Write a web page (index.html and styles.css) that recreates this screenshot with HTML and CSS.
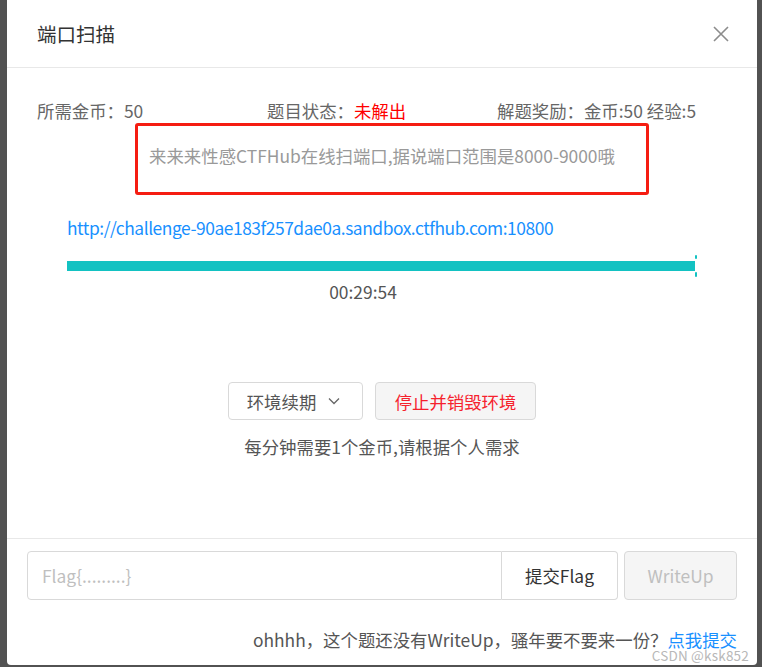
FILE: index.html
```html
<!DOCTYPE html>
<html lang="zh-CN">
<head>
<meta charset="utf-8">
<title>端口扫描</title>
<link rel="stylesheet" href="styles.css">
</head>
<body>
<div class="modal">
  <div class="modal-header">
    <div class="modal-title">端口扫描</div>
    <span class="close">
      <svg width="16" height="16" viewBox="0 0 16 16"><path d="M1 1L15 15M15 1L1 15" stroke="#8c8c8c" stroke-width="1.6" fill="none"/></svg>
    </span>
  </div>
  <div class="modal-body">
    <div class="info-row">
      <div class="info-col">所需金币：50</div>
      <div class="info-col">题目状态：<span class="unsolved">未解出</span></div>
      <div class="info-col">解题奖励：金币:50 经验:5</div>
    </div>
    <div class="desc">
      <p class="desc-text">来来来性感CTFHub在线扫端口,据说端口范围是8000-9000哦</p>
      <div class="annot"></div>
    </div>
    <div class="env">
      <a class="url" href="#">http://challenge-90ae183f257dae0a.sandbox.ctfhub.com:10800</a>
      <div class="progress">
        <div class="bar"></div>
        <span class="mark mark-top"></span>
        <span class="mark mark-bottom"></span>
      </div>
      <div class="timer">00:29:54</div>
    </div>
    <div class="actions">
      <button class="btn btn-renew">环境续期
        <svg class="chev" width="12" height="8" viewBox="0 0 12 8"><path d="M1 1.5L6 6.5L11 1.5" stroke="#666" stroke-width="1.3" fill="none"/></svg>
      </button>
      <button class="btn btn-stop">停止并销毁环境</button>
    </div>
    <div class="hint">每分钟需要1个金币,请根据个人需求</div>
  </div>
  <div class="modal-footer">
    <div class="flag-row">
      <div class="input-group">
        <input class="flag-input" type="text" placeholder="Flag{.........}">
        <button class="btn-submit">提交Flag</button>
      </div>
      <button class="btn-writeup" disabled>WriteUp</button>
    </div>
    <div class="wu-note">ohhhh，这个题还没有WriteUp，骚年要不要来一份？<a href="#" class="wu-link">点我提交</a></div>
  </div>
  <div class="watermark">CSDN @ksk852</div>
</div>
</body>
</html>
```
FILE: styles.css
```css
* { box-sizing: border-box; }
html, body { margin: 0; padding: 0; }
body {
  width: 762px;
  height: 667px;
  background: #525252;
  font-family: "Noto Sans CJK SC", "Noto Sans", sans-serif;
  overflow: hidden;
}
.modal {
  position: relative;
  margin-left: 7px;
  width: 750px;
  height: 665px;
  background: #fff;
  border-radius: 0 0 4px 4px;
  display: flex;
  flex-direction: column;
}
.modal-header {
  height: 68px;
  border-bottom: 1px solid #e8e8e8;
  display: flex;
  align-items: center;
  justify-content: space-between;
  padding: 0 28px 0 30px;
}
.modal-title {
  font-size: 19.5px;
  color: #333;
}
.close { display: flex; width: 16px; height: 16px; }
.modal-body {
  flex: 1;
  padding: 31px 30px 0;
  color: #666;
  font-size: 17.4px;
}
.info-row { display: flex; height: 24px; line-height: 24px; }
.info-col { width: 230px; white-space: nowrap; }
.unsolved { color: #ff0000; }
.desc {
  position: relative;
  height: 72px;
  padding-top: 21px;
}
.desc-text {
  margin: 0;
  line-height: 24px;
  text-align: center;
  color: #999;
}
.annot {
  position: absolute;
  left: 98px;
  top: 0;
  width: 514px;
  height: 72px;
  border: 3px solid #f51d12;
  border-radius: 3px;
}
.env { padding: 0 30px; }
.url {
  display: block;
  margin-top: 21px;
  line-height: 24px;
  color: #1890ff;
  text-decoration: none;
  letter-spacing: -0.45px;
}
.progress {
  position: relative;
  margin-top: 21px;
  height: 10px;
  padding-right: 2px;
}
.bar { height: 10px; background: #13c2c2; }
.mark {
  position: absolute;
  right: 0;
  width: 2px;
  height: 4px;
  background: #13c2c2;
  border-radius: 1px;
}
.mark-top { top: -6px; }
.mark-bottom { top: 11px; height: 5px; }
.timer {
  margin-top: 9px;
  line-height: 24px;
  text-align: center;
  padding-right: 38px;
  color: #555;
}
.actions {
  margin-top: 78px;
  display: flex;
  justify-content: center;
  gap: 12px;
}
.btn {
  height: 38px;
  border: 1px solid #d9d9d9;
  border-radius: 4px;
  font-family: inherit;
  font-size: 17.4px;
  padding: 0;
  display: flex;
  align-items: center;
  justify-content: center;
  white-space: nowrap;
}
.btn-renew { background: #fff; color: #555; width: 135px; gap: 12px; padding-right: 4px; }
.chev { display: block; }
.btn-stop { background: #f5f5f5; color: #f5222d; width: 161px; }
.hint {
  margin-top: 15px;
  line-height: 24px;
  text-align: center;
  color: #555;
}
.modal-footer {
  height: 127px;
  border-top: 1px solid #e8e8e8;
  padding: 12px 20px 0;
}
.flag-row { display: flex; gap: 6px; }
.input-group { display: flex; flex: 1; }
.flag-input {
  flex: 1;
  min-width: 0;
  height: 49px;
  border: 1px solid #d9d9d9;
  border-radius: 4px 0 0 4px;
  padding: 0 14px;
  font-family: inherit;
  font-size: 17.4px;
  color: #333;
  outline: none;
}
.flag-input::placeholder { color: #bfbfbf; }
.btn-submit {
  width: 116px;
  height: 49px;
  border: 1px solid #d9d9d9;
  border-left: none;
  border-radius: 0 4px 4px 0;
  background: #fff;
  font-family: inherit;
  font-size: 17.4px;
  color: #333;
}
.btn-writeup {
  width: 113px;
  height: 49px;
  border: 1px solid #d9d9d9;
  border-radius: 4px;
  background: #f5f5f5;
  font-family: inherit;
  font-size: 17.4px;
  color: #bfbfbf;
}
.wu-note {
  margin-top: 28px;
  text-align: right;
  line-height: 24px;
  font-size: 17.4px;
  color: #555;
}
.wu-link { color: #1890ff; text-decoration: none; }
.watermark {
  position: absolute;
  right: 8px;
  bottom: 2px;
  font-size: 13.5px;
  line-height: 16px;
  color: #b8b8b8;
  letter-spacing: 0.2px;
}
```
